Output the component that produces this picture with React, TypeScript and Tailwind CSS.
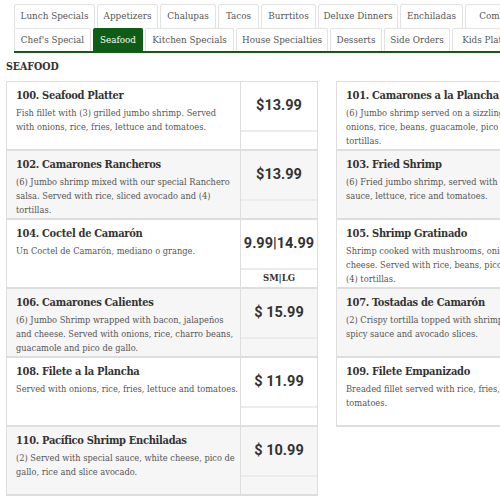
import React from "react";

const serif = "font-['DejaVu_Serif_Condensed','DejaVu_Serif',serif]";

type Item = { title: string; lines: string[]; price: string; sub?: string };

const left: Item[] = [
  { title: "100. Seafood Platter", lines: ["Fish fillet with (3) grilled jumbo shrimp. Served", "with onions, rice, fries, lettuce and tomatoes."], price: "$13.99" },
  { title: "102. Camarones Rancheros", lines: ["(6) Jumbo shrimp mixed with our special Ranchero", "salsa. Served with rice, sliced avocado and (4)", "tortillas."], price: "$13.99" },
  { title: "104. Coctel de Camarón", lines: ["Un Coctel de Camarón, mediano o grange."], price: "9.99|14.99", sub: "SM|LG" },
  { title: "106. Camarones Calientes", lines: ["(6) Jumbo Shrimp wrapped with bacon, jalapeños", "and cheese. Served with onions, rice, charro beans,", "guacamole and pico de gallo."], price: "$ 15.99" },
  { title: "108. Filete a la Plancha", lines: ["Served with onions, rice, fries, lettuce and tomatoes."], price: "$ 11.99" },
  { title: "110. Pacífico Shrimp Enchiladas", lines: ["(2) Served with special sauce, white cheese, pico de", "gallo, rice and slice avocado."], price: "$ 10.99" },
];

const right: Item[] = [
  { title: "101. Camarones a la Plancha", lines: ["(6) Jumbo shrimp served on a sizzling skillet with", "onions, rice, beans, guacamole, pico de gallo and (4)", "tortillas."], price: "$14.99" },
  { title: "103. Fried Shrimp", lines: ["(6) Fried jumbo shrimp, served with fries, tartar", "sauce, lettuce, rice and tomatoes."], price: "$13.99" },
  { title: "105. Shrimp Gratinado", lines: ["Shrimp cooked with mushrooms, onions and melted", "cheese. Served with rice, beans, pico de gallo and", "(4) tortillas."], price: "$14.99" },
  { title: "107. Tostadas de Camarón", lines: ["(2) Crispy tortilla topped with shrimp, lettuce,", "spicy sauce and avocado slices."], price: "$ 11.99" },
  { title: "109. Filete Empanizado", lines: ["Breaded fillet served with rice, fries, lettuce and", "tomatoes."], price: "$ 11.99" },
];

const row1 = [
  ["Lunch Specials", "w-[81px]"],
  ["Appetizers", "w-[61px]"],
  ["Chalupas", "w-[56px]"],
  ["Tacos", "w-[41px]"],
  ["Burrtitos", "w-[55px]"],
  ["Deluxe Dinners", "w-[80px]"],
  ["Enchiladas", "w-[63px]"],
  ["Combinations", "w-[90px]"],
];
const row2 = [
  ["Chef's Special", "w-[77px]"],
  ["Seafood", "w-[50px]"],
  ["Kitchen Specials", "w-[89px]"],
  ["House Specialties", "w-[92px]"],
  ["Desserts", "w-[52px]"],
  ["Side Orders", "w-[66px]"],
  ["Kids Plates", "w-[70px]"],
];

function Row({ item, gray }: { item: Item; gray: boolean }) {
  return (
    <div className={`grid grid-cols-[234px_1fr] h-[69px] border-b-2 border-[#dedede] ${gray ? "bg-[#f6f6f6]" : "bg-white"}`}>
      <div className="pl-[9px] pt-[6px] border-r border-[#dedede]">
        <div className={`${serif} text-[11px] font-bold text-[#333] leading-[16px] whitespace-nowrap tracking-[-0.3px]`}>{item.title}</div>
        <div className={`${serif} text-[9.2px] text-[#555] leading-[14px] mt-[2px] whitespace-nowrap`}>
          {item.lines.map((l, i) => (
            <div key={i}>{l}</div>
          ))}
        </div>
      </div>
      <div className="flex flex-col">
        <div className="h-[48px] flex items-center justify-center font-['Roboto',sans-serif] font-bold text-[14.5px] text-[#333]">{item.price}</div>
        <div className={`flex-1 border-t-2 border-[#ececec] flex items-center justify-center ${serif} text-[9.5px] font-bold text-[#333]`}>{item.sub ?? ""}</div>
      </div>
    </div>
  );
}

export default function App() {
  return (
    <div className="w-[500px] h-[500px] overflow-hidden bg-white">
      <div className="pl-[14px] pt-[4px]">
        <div className="flex gap-[2px] whitespace-nowrap">
          {row1.map(([t, w]) => (
            <div key={t} className={`${w} shrink-0 h-[24px] flex items-center justify-center border border-b-0 border-[#e2e2e2] rounded-t-[3px] bg-white ${serif} text-[9.8px] text-[#555]`}>{t}</div>
          ))}
        </div>
        <div className="flex gap-[2px] whitespace-nowrap border-b-2 border-[#155a15] w-[600px]">
          {row2.map(([t, w]) => (
            <div key={t} className={`${w} shrink-0 h-[23px] flex items-center justify-center border border-b-0 rounded-t-[2px] ${serif} text-[9.8px] ${t === "Seafood" ? "bg-[#0d5e14] border-[#0d5e14] text-white" : "bg-white border-[#e2e2e2] text-[#555]"}`}>{t}</div>
          ))}
        </div>
      </div>
      <div className={`pl-[6px] mt-[6px] ${serif} text-[10.5px] font-bold text-[#333] leading-[14px]`}>SEAFOOD</div>
      <div className="flex gap-[18px] pl-[6px] mt-[8px] items-start">
        <div className="w-[312px] shrink-0 border border-b-0 border-[#dedede]">
          {left.map((it, i) => (
            <Row key={i} item={it} gray={i % 2 === 1} />
          ))}
        </div>
        <div className="w-[312px] shrink-0 border border-b-0 border-[#dedede]">
          {right.map((it, i) => (
            <Row key={i} item={it} gray={i % 2 === 1} />
          ))}
        </div>
      </div>
    </div>
  );
}
